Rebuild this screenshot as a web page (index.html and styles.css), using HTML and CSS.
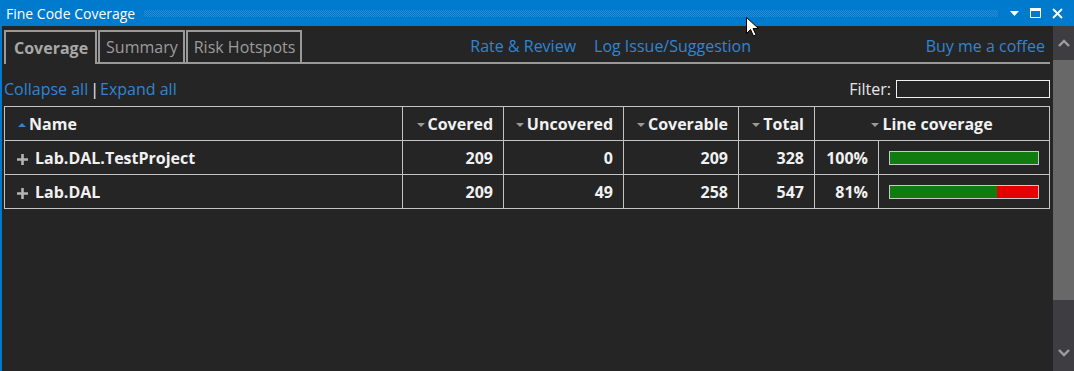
FILE: index.html
```html
<!DOCTYPE html>
<html lang="en">
<head>
    <meta charset="UTF-8">
    <title>Fine Code Coverage</title>
    <link rel="stylesheet" href="styles.css">
</head>
<body>
    <div class="window">
        <div class="titlebar">
            <span class="titlebar__title">Fine Code Coverage</span>
            <span class="titlebar__grip"></span>
            <span class="titlebar__controls">
                <svg width="9" height="5" viewBox="0 0 9 5"><path d="M0 0h9L4.5 5z" fill="#fff"/></svg>
                <svg width="11" height="10" viewBox="0 0 11 10"><path d="M0.5 1.5h10v8h-10z" fill="none" stroke="#fff"/><rect x="0" y="0" width="11" height="3" fill="#fff"/></svg>
                <svg width="11" height="11" viewBox="0 0 11 11"><path d="M1 1l9 9M10 1l-9 9" stroke="#fff" stroke-width="1.8"/></svg>
            </span>
        </div>
        <div class="frame">
            <div class="panel">
                <div class="tabbar">
                    <div class="tab tab--active">Coverage</div>
                    <div class="tab">Summary</div>
                    <div class="tab">Risk Hotspots</div>
                    <div class="tabbar__links">
                        <a class="link">Rate &amp; Review</a>
                        <a class="link">Log Issue/Suggestion</a>
                        <a class="link link--end">Buy me a coffee</a>
                    </div>
                </div>
                <div class="toolbar">
                    <a class="link">Collapse all</a><span class="toolbar__sep">|</span><a class="link">Expand all</a>
                    <label class="toolbar__filter">Filter: <input type="text" class="toolbar__input"></label>
                </div>
                <table class="grid">
                    <colgroup>
                        <col style="width: 398px">
                        <col style="width: 101px">
                        <col style="width: 120px">
                        <col style="width: 115px">
                        <col style="width: 76px">
                        <col style="width: 64px">
                        <col>
                    </colgroup>
                    <thead>
                        <tr>
                            <th class="grid__name"><span class="sort sort--up"></span>Name</th>
                            <th><span class="sort"></span>Covered</th>
                            <th><span class="sort"></span>Uncovered</th>
                            <th><span class="sort"></span>Coverable</th>
                            <th><span class="sort"></span>Total</th>
                            <th colspan="2" class="grid__center"><span class="sort"></span>Line coverage</th>
                        </tr>
                    </thead>
                    <tbody>
                        <tr>
                            <td class="grid__name"><svg class="plus" width="11" height="11" viewBox="0 0 11 11"><path d="M5.5 0v11M0 5.5h11" stroke="#b4b4b4" stroke-width="2.6"/></svg>Lab.DAL.TestProject</td>
                            <td>209</td>
                            <td>0</td>
                            <td>209</td>
                            <td>328</td>
                            <td>100%</td>
                            <td class="grid__bar"><div class="bar"><div class="bar__fill" style="width: 100%"></div></div></td>
                        </tr>
                        <tr>
                            <td class="grid__name"><svg class="plus" width="11" height="11" viewBox="0 0 11 11"><path d="M5.5 0v11M0 5.5h11" stroke="#b4b4b4" stroke-width="2.6"/></svg>Lab.DAL</td>
                            <td>209</td>
                            <td>49</td>
                            <td>258</td>
                            <td>547</td>
                            <td>81%</td>
                            <td class="grid__bar"><div class="bar"><div class="bar__fill" style="width: 72%"></div></div></td>
                        </tr>
                    </tbody>
                </table>
            </div>
            <div class="scrollbar">
                <div class="scrollbar__arrow">
                    <svg width="12" height="8" viewBox="0 0 12 8"><path d="M1 7l5-5 5 5" fill="none" stroke="#9e9e9e" stroke-width="2.4"/></svg>
                </div>
                <div class="scrollbar__thumb"></div>
                <div class="scrollbar__track"></div>
                <div class="scrollbar__arrow scrollbar__arrow--down">
                    <svg width="12" height="8" viewBox="0 0 12 8"><path d="M1 1l5 5 5-5" fill="none" stroke="#9e9e9e" stroke-width="2.4"/></svg>
                </div>
            </div>
        </div>
        <svg class="cursor" width="13" height="20" viewBox="0 0 13 20"><path d="M0.5 0.5v16l4-4 3 6.5 2.5-1.2-3-6.3h5.5z" fill="#fff" stroke="#000" stroke-width="1"/></svg>
    </div>
</body>
</html>
```

FILE: styles.css
```css
/* Tool window */
html, body {
    margin: 0;
    padding: 0;
    background-color: #252526;
    font-family: 'Open Sans', 'Noto Sans', Arial, sans-serif;
    color: #f1f1f1;
}

.window {
    position: relative;
    width: 1074px;
    height: 371px;
    display: flex;
    flex-direction: column;
    overflow: hidden;
}

.titlebar {
    height: 26px;
    background-color: #007acc;
    display: flex;
    align-items: center;
    padding-left: 6px;
    color: #fff;
    font-size: 14px;
    flex-shrink: 0;
}

.titlebar__grip {
    flex: 1;
    height: 7px;
    margin: 1px 12px 0 9px;
    background: repeating-conic-gradient(#2a8bd2 0 25%, transparent 0 50%) 0 0 / 2px 2px;
}

.titlebar__controls {
    display: flex;
    align-items: center;
    gap: 11px;
    margin-right: 11px;
}

.frame {
    flex: 1;
    display: flex;
    border-left: 2px solid #007acc;
}

.panel {
    flex: 1;
    padding: 4px 3px 0 2px;
    font-size: 16px;
}

/* Tabs */
.tabbar {
    display: flex;
    align-items: stretch;
    height: 32px;
    border-bottom: 2px solid #999;
}

.tab {
    border: 2px solid #999;
    border-bottom: none;
    padding: 0 5px 0 6px;
    margin-right: 1px;
    color: #9c9c9c;
    font-size: 16px;
    display: flex;
    align-items: center;
}

.tab--active {
    font-weight: 700;
    color: #a8a8a8;
    padding: 0 7px 0 8px;
    margin-bottom: -2px;
    background-color: #252526;
}

.tabbar__links {
    flex: 1;
    display: flex;
    align-items: center;
    padding-left: 167px;
    gap: 18px;
}

.link {
    color: #2f85d4;
    font-size: 16px;
    cursor: pointer;
}

.link--end {
    margin-left: auto;
    margin-right: 5px;
}

/* Collapse / filter row */
.toolbar {
    display: flex;
    align-items: center;
    height: 22px;
    margin: 14px 0 6px;
}

.toolbar__sep {
    color: #f1f1f1;
    margin: 0 1px 0 2px;
}

.toolbar__filter {
    margin-left: auto;
    display: flex;
    align-items: center;
    gap: 5px;
    color: #e6e6e6;
    font-size: 16px;
}

.toolbar__input {
    width: 152px;
    height: 16px;
    padding: 0;
    border: 1px solid #f0f0f0;
    background-color: #252526;
}

/* Coverage grid */
.grid {
    width: 100%;
    border-collapse: collapse;
    table-layout: fixed;
    font-size: 16px;
    font-weight: 700;
}

.grid th,
.grid td {
    border: 1px solid #c4c4c4;
    height: 33px;
    padding: 0 10px 0 0;
    text-align: right;
    white-space: nowrap;
}

.grid .grid__name {
    text-align: left;
    padding-left: 12px;
}

.grid .grid__center {
    text-align: center;
    padding-right: 0;
}

.sort {
    display: inline-block;
    width: 0;
    height: 0;
    border-left: 4px solid transparent;
    border-right: 4px solid transparent;
    border-top: 4px solid #9a9a9a;
    margin-right: 3px;
    vertical-align: middle;
}

.sort--up {
    border-top: none;
    border-bottom: 4px solid #2f85d4;
    margin-left: 1px;
}

.plus {
    margin-right: 7px;
    vertical-align: -1px;
}

.grid .grid__bar {
    padding: 0 0 0 10px;
}

.bar {
    width: 148px;
    height: 12px;
    border: 1px solid #c8c8c8;
    background-color: #e50000;
}

.bar__fill {
    height: 100%;
    background-color: #107c10;
}

/* Scrollbar */
.scrollbar {
    width: 21px;
    display: flex;
    flex-direction: column;
    background-color: #3e3e42;
}

.scrollbar__arrow {
    height: 34px;
    display: flex;
    align-items: center;
    justify-content: center;
}

.scrollbar__arrow--down {
    height: 37px;
}

.scrollbar__thumb {
    height: 240px;
    background-color: #686868;
}

.scrollbar__track {
    flex: 1;
}

.cursor {
    position: absolute;
    left: 746px;
    top: 17px;
}
```
